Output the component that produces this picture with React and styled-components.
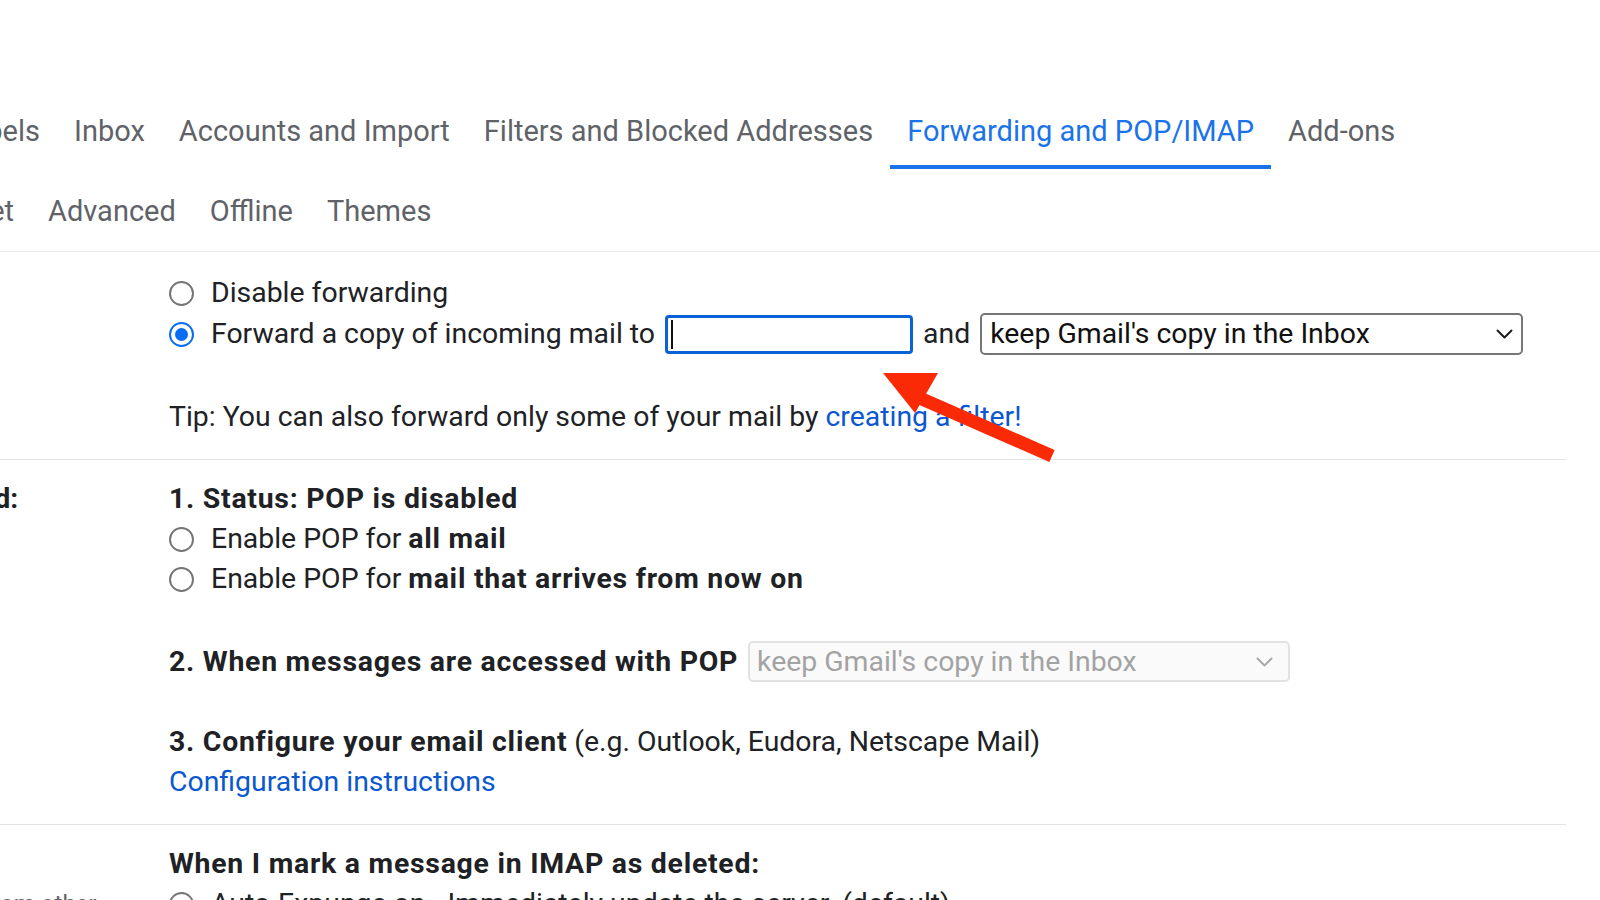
import React from 'react'
import styled, { createGlobalStyle } from 'styled-components';

const GlobalStyle = createGlobalStyle`
    html, body {
        margin: 0;
        padding: 0;
        background: #fff;
        overflow: hidden;
    }

    body {
        font-family: Roboto, "Noto Sans", Arial, sans-serif;
        color: #202124;
    }

    #root {
        width: 1600px;
        height: 900px;
        overflow: hidden;
        position: relative;
    }
`;

const rowOne = {
    hidden: ['General', 'Labels'],
    shown: ['Inbox', 'Accounts and Import', 'Filters and Blocked Addresses', 'Forwarding and POP/IMAP', 'Add-ons'],
};

const rowTwo = {
    hidden: ['Chat and Meet'],
    shown: ['Advanced', 'Offline', 'Themes'],
};

const ACTIVE = 'Forwarding and POP/IMAP';

const TabLine = ({ row, lead }) => (
    <StyledTabRow>
        <TabLead $w={lead}>
            {row.hidden.map((t) => <Tab key={t}>{t}</Tab>)}
        </TabLead>
        {row.shown.map((t) => (
            <Tab key={t} $active={t === ACTIVE}>{t}</Tab>
        ))}
    </StyledTabRow>
);

const Chevron = ({ color }) => (
    <svg width="17" height="10" viewBox="0 0 17 10" fill="none">
        <path d="M1.5 1.5 L8.5 8.5 L15.5 1.5" stroke={color} strokeWidth="2" strokeLinecap="round" strokeLinejoin="round" />
    </svg>
);

const Settings = () => {
    return (
        <Screen>
            <GlobalStyle />
            <TabBar>
                <TabLine row={rowOne} lead={57} />
                <TabLine row={rowTwo} lead={31} />
            </TabBar>

            <Sections>
                <Section>
                    <LabelCell>
                        <Label>Forwarding:</Label>
                        <SubLink>Learn more</SubLink>
                    </LabelCell>
                    <Body>
                        <OptionRow>
                            <Radio />
                            <span>Disable forwarding</span>
                        </OptionRow>
                        <OptionRow>
                            <Radio $checked />
                            <Inline>
                                <span>Forward a copy of incoming mail to</span>
                                <InputBox><Caret /></InputBox>
                                <span>and</span>
                                <Select $width={543}>
                                    <span>keep Gmail's copy in the Inbox</span>
                                    <Chevron color="#1f1f1f" />
                                </Select>
                            </Inline>
                        </OptionRow>
                        <Line $gap={42}>
                            Tip: You can also forward only some of your mail by <Link>creating a filter!</Link>
                        </Line>
                    </Body>
                </Section>

                <Section>
                    <LabelCell>
                        <Label>POP download:</Label>
                        <SubLink>Learn more</SubLink>
                    </LabelCell>
                    <Body>
                        <Line><b>1. Status: POP is disabled</b></Line>
                        <OptionRow>
                            <Radio />
                            <span>Enable POP for <b>all mail</b></span>
                        </OptionRow>
                        <OptionRow>
                            <Radio />
                            <span>Enable POP for <b>mail that arrives from now on</b></span>
                        </OptionRow>
                        <Inline $gap={42}>
                            <b>2. When messages are accessed with POP</b>
                            <Select $width={542} $disabled>
                                <span>keep Gmail's copy in the Inbox</span>
                                <Chevron color="#a9a9a9" />
                            </Select>
                        </Inline>
                        <Line $gap={40}>
                            <b>3. Configure your email client</b> (e.g. Outlook, Eudora, Netscape Mail)
                        </Line>
                        <Line><Link>Configuration instructions</Link></Line>
                    </Body>
                </Section>

                <Section>
                    <LabelCell>
                        <Label>IMAP access:</Label>
                        <SubText>(access Gmail from other clients using IMAP)</SubText>
                        <SubLink>Learn more</SubLink>
                    </LabelCell>
                    <Body>
                        <Line><b>When I mark a message in IMAP as deleted:</b></Line>
                        <OptionRow>
                            <Radio />
                            <span>Auto-Expunge on - Immediately update the server. (default)</span>
                        </OptionRow>
                        <OptionRow>
                            <Radio />
                            <span>Auto-Expunge off - Wait for the client to update the server.</span>
                        </OptionRow>
                    </Body>
                </Section>
            </Sections>

            <Annotation width="1600" height="900" viewBox="0 0 1600 900">
                <line x1="1052" y1="456" x2="906" y2="392" stroke="#fb2a06" strokeWidth="13" />
                <polygon points="883,373 938,373 915,413" fill="#fb2a06" />
            </Annotation>
        </Screen>
    )
}

const Screen = styled.div`
    width: 1600px;
    height: 900px;
    overflow: hidden;
    position: relative;
`;

const TabBar = styled.div`
    padding: 97px 0 2px;
    display: flex;
    flex-direction: column;
    gap: 8px;
    border-bottom: 1px solid #e4e7eb;
`;

const StyledTabRow = styled.div`
    display: flex;
    height: 72px;
`;

const TabLead = styled.div`
    display: flex;
    justify-content: flex-end;
    flex: 0 0 ${(p) => p.$w}px;
    min-width: 0;
`;

const Tab = styled.div`
    flex-shrink: 0;
    display: flex;
    align-items: center;
    box-sizing: border-box;
    height: 72px;
    padding: 0 17px;
    border-bottom: 4px solid ${(p) => (p.$active ? '#1a73e8' : 'transparent')};
    color: ${(p) => (p.$active ? '#1a73e8' : '#5f6368')};
    font-size: 29px;
    white-space: nowrap;
`;

const Sections = styled.div`
    margin-left: -174px;
    margin-right: 34px;
`;

const Section = styled.div`
    display: grid;
    grid-template-columns: 343px 1fr;
    padding: 19px 0 22px;
    border-bottom: 1px solid #e3e3e3;

    &:first-child {
        padding-top: 21px;
    }
`;

const LabelCell = styled.div`
    display: flex;
    flex-direction: column;
    padding-right: 14px;
`;

const Label = styled.div`
    font-size: 28px;
    font-weight: 700;
    line-height: 40px;
    white-space: nowrap;
`;

const SubText = styled.div`
    font-size: 24px;
    line-height: 40px;
    color: #5f6368;
`;

const SubLink = styled(SubText)`
    color: #0b57d0;
`;

const Body = styled.div`
    display: flex;
    flex-direction: column;
    font-size: 28.4px;
    line-height: 40px;
    white-space: nowrap;

    b {
        font-weight: 700;
        letter-spacing: 0.75px;
    }
`;

const OptionRow = styled.div`
    display: flex;
    align-items: center;
    gap: 17px;
    min-height: 40px;
`;

const Inline = styled.div`
    display: flex;
    align-items: center;
    gap: 10px;
    margin-top: ${(p) => p.$gap || 0}px;
`;

const Line = styled.div`
    margin-top: ${(p) => p.$gap || 0}px;
`;

const Link = styled.span`
    color: #0b57d0;
`;

const Radio = styled.span`
    flex-shrink: 0;
    box-sizing: border-box;
    width: 25px;
    height: 25px;
    border-radius: 50%;
    border: 2px solid ${(p) => (p.$checked ? '#0a6cf2' : '#767676')};
    display: grid;
    place-items: center;

    &::after {
        content: '';
        width: 13px;
        height: 13px;
        border-radius: 50%;
        background: ${(p) => (p.$checked ? '#0a6cf2' : 'transparent')};
    }
`;

const InputBox = styled.div`
    box-sizing: border-box;
    width: 248px;
    height: 39px;
    border: 3px solid #0b61d6;
    border-radius: 4px;
    display: flex;
    align-items: center;
    padding-left: 3px;
`;

const Caret = styled.span`
    width: 2px;
    height: 29px;
    background: #111;
`;

const Select = styled.div`
    box-sizing: border-box;
    width: ${(p) => p.$width}px;
    height: ${(p) => (p.$disabled ? 41 : 42)}px;
    border: 2px solid ${(p) => (p.$disabled ? '#e2e2e2' : '#767676')};
    border-radius: 5px;
    background: ${(p) => (p.$disabled ? '#fafafa' : '#fff')};
    color: ${(p) => (p.$disabled ? '#a3a3a3' : '#111')};
    display: flex;
    align-items: center;
    justify-content: space-between;
    padding: 0 ${(p) => (p.$disabled ? 15 : 8)}px 0 ${(p) => (p.$disabled ? 7 : 8)}px;
    font-weight: 400;
    letter-spacing: normal;
`;

const Annotation = styled.svg`
    position: absolute;
    left: 0;
    top: 0;
    pointer-events: none;
`;

export default Settings;
